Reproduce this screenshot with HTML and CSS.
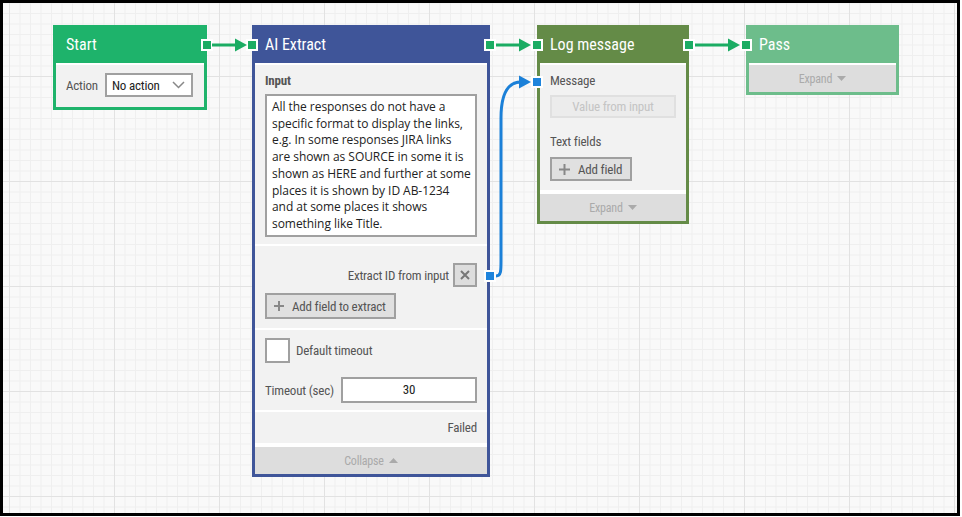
FILE: index.html
```html
<!DOCTYPE html>
<html lang="en">
<head>
    <meta charset="UTF-8">
    <meta name="viewport" content="width=device-width, initial-scale=1.0">
    <title>Flow editor</title>
    <link rel="stylesheet" href="styles.css">
</head>
<body>
    <div class="frame">
        <!-- Start -->
        <div class="node node-start">
            <div class="node-head">Start<span class="port port-out"></span></div>
            <div class="node-body">
                <div class="section section-start">
                    <span class="label">Action</span>
                    <div class="select">
                        <span>No action</span>
                        <svg width="13" height="8" viewBox="0 0 13 8"><polyline points="1,1 6.5,6.5 12,1" fill="none" stroke="#888" stroke-width="1.5"/></svg>
                    </div>
                </div>
            </div>
        </div>

        <!-- AI Extract -->
        <div class="node node-ai">
            <div class="node-head"><span class="port port-in"></span>AI Extract<span class="port port-out"></span></div>
            <div class="node-body">
                <div class="section">
                    <div class="label label-strong">Input</div>
                    <textarea class="textarea" wrap="off" readonly>All the responses do not have a
specific format to display the links,
e.g. In some responses JIRA links
are shown as SOURCE in some it is
shown as HERE and further at some
places it is shown by ID AB-1234
and at some places it shows
something like Title.</textarea>
                </div>
                <div class="section section-extract">
                    <div class="field-row">
                        <span class="label">Extract ID from input</span>
                        <span class="icon-btn">
                            <svg width="10" height="10" viewBox="0 0 10 10"><path d="M1 1 L9 9 M9 1 L1 9" stroke="#777" stroke-width="2"/></svg>
                        </span>
                        <span class="port port-blue port-right"></span>
                    </div>
                    <div class="btn">
                        <svg width="10" height="10" viewBox="0 0 10 10"><path d="M5 0 V10 M0 5 H10" stroke="#888" stroke-width="2"/></svg>
                        <span>Add field to extract</span>
                    </div>
                </div>
                <div class="section">
                    <div class="check-row">
                        <span class="checkbox"></span>
                        <span class="label">Default timeout</span>
                    </div>
                    <div class="timeout-row">
                        <span class="label">Timeout (sec)</span>
                        <div class="text-input">30</div>
                    </div>
                </div>
                <div class="section section-status">
                    <span class="label">Failed</span>
                </div>
                <div class="footer">Collapse
                    <svg width="9" height="5" viewBox="0 0 9 5"><polygon points="0,5 4.5,0 9,5" fill="#aaa"/></svg>
                </div>
            </div>
        </div>

        <!-- Log message -->
        <div class="node node-log">
            <div class="node-head"><span class="port port-in"></span>Log message<span class="port port-out"></span></div>
            <div class="node-body">
                <div class="section section-log">
                    <div class="label field-row-left">Message<span class="port port-blue port-left"></span></div>
                    <div class="value-box">Value from input</div>
                    <div class="label label-gap">Text fields</div>
                    <div class="btn btn-small">
                        <svg width="11" height="11" viewBox="0 0 11 11"><path d="M5.5 0 V11 M0 5.5 H11" stroke="#888" stroke-width="2"/></svg>
                        <span>Add field</span>
                    </div>
                </div>
                <div class="footer">Expand
                    <svg width="9" height="5" viewBox="0 0 9 5"><polygon points="0,0 9,0 4.5,5" fill="#aaa"/></svg>
                </div>
            </div>
        </div>

        <!-- Pass -->
        <div class="node node-pass">
            <div class="node-head"><span class="port port-in"></span>Pass</div>
            <div class="node-body">
                <div class="footer">Expand
                    <svg width="9" height="5" viewBox="0 0 9 5"><polygon points="0,0 9,0 4.5,5" fill="#aaa"/></svg>
                </div>
            </div>
        </div>

        <svg class="edges" width="954" height="510" viewBox="3 3 954 510">
            <g fill="#1bac63" stroke="#1bac63">
                <line x1="212" y1="45" x2="237" y2="45" stroke-width="3"/>
                <polygon points="235,38.5 247,45 235,51.5" stroke="none"/>
                <line x1="496" y1="45" x2="521" y2="45" stroke-width="3"/>
                <polygon points="519,38.5 531,45 519,51.5" stroke="none"/>
                <line x1="695" y1="45" x2="730" y2="45" stroke-width="3"/>
                <polygon points="728,38.5 740,45 728,51.5" stroke="none"/>
            </g>
            <path d="M496 276 C501 276 501 271 501 261 L501 118 C501 96 506 82 521 82" fill="none" stroke="#1b80d8" stroke-width="3"/>
            <polygon points="519,75.5 531,82 519,88.5" fill="#1b80d8"/>
        </svg>
    </div>
</body>
</html>
```

FILE: styles.css
```css
* {
    box-sizing: border-box;
}
body {
    margin: 0;
    background: #fff;
    font-family: "Roboto Condensed", "Liberation Sans Narrow", Roboto, sans-serif;
    font-stretch: condensed;
    font-size: 13px;
    letter-spacing: -0.2px;
    color: #555;
}
.frame {
    position: relative;
    width: 960px;
    height: 516px;
    border: 3px solid #000;
    overflow: hidden;
    background-color: #f9f9f9;
    background-image:
        linear-gradient(to right, #e2e2e2 1px, transparent 1px),
        linear-gradient(to bottom, #e2e2e2 1px, transparent 1px),
        linear-gradient(to right, #efefef 1px, transparent 1px),
        linear-gradient(to bottom, #efefef 1px, transparent 1px);
    background-size: 105px 105px, 105px 105px, 10.5px 10.5px, 10.5px 10.5px;
    background-position: 6px 73px;
}
.edges {
    position: absolute;
    left: 0;
    top: 0;
    pointer-events: none;
}

/* nodes */
.node {
    position: absolute;
    top: 22px;
    border: 3px solid var(--c);
    background: #fff;
}
.node-start { --c: #1eb36b; left: 50px; width: 154px; }
.node-ai    { --c: #3f5599; left: 249px; width: 238px; }
.node-log   { --c: #648b47; left: 534px; width: 152px; }
.node-pass  { --c: #6dbd8b; left: 743px; width: 153px; }

.node-head {
    position: relative;
    display: flex;
    align-items: center;
    height: 35px;
    padding: 0 0 2px 10px;
    background: var(--c);
    color: #fff;
    font-size: 16px;
    letter-spacing: 0;
}
.node-body {
    display: flex;
    flex-direction: column;
    gap: 2px;
    padding-top: 2px;
    background: #fff;
}
.section {
    background: #f2f2f2;
    padding: 8px 10px 7px;
}
.footer {
    display: flex;
    align-items: center;
    justify-content: center;
    gap: 5px;
    height: 27px;
    background: #ddd;
    color: #aaa;
    font-size: 12px;
}
.section + .footer {
    margin-top: 2px;
}

/* ports */
.port {
    position: absolute;
    top: 11px;
    width: 12px;
    height: 12px;
    border: 2px solid #fff;
    background: #1bac63;
}
.port-in { left: -9px; }
.port-out { right: -9px; }
.port-blue {
    background: #1e84dc;
    top: 50%;
    margin-top: -5px;
}
.port-right { right: -19px; }
.port-left { left: -19px; }

/* fields */
.label {
    line-height: 15px;
    color: #555;
}
.label-strong {
    font-weight: bold;
    margin-bottom: 6px;
}
.section-start {
    display: flex;
    align-items: center;
    gap: 7px;
    padding: 8px 10px 10px;
}
.select {
    display: flex;
    align-items: center;
    justify-content: space-between;
    width: 88px;
    height: 24px;
    padding: 0 6px 0 5px;
    border: 2px solid #a0a0a0;
    background: #fff;
    color: #222;
}
.textarea {
    display: block;
    width: 100%;
    height: 143px;
    margin: 0;
    padding: 3px 5px;
    border: 2px solid #a0a0a0;
    background: #fff;
    color: #222;
    font-family: "Open Sans", sans-serif;
    font-size: 12px;
    line-height: 16.7px;
    letter-spacing: -0.05px;
    white-space: pre;
    resize: none;
    overflow: hidden;
    outline: none;
}
.section-extract {
    display: flex;
    flex-direction: column;
    align-items: flex-start;
    padding: 17px 10px 9px;
}
.field-row {
    position: relative;
    align-self: stretch;
    display: flex;
    align-items: center;
    justify-content: flex-end;
    gap: 4px;
    height: 24px;
}
.icon-btn {
    display: flex;
    align-items: center;
    justify-content: center;
    width: 24px;
    height: 24px;
    border: 2px solid #a0a0a0;
    background: #ddd;
}
.btn {
    display: inline-flex;
    align-items: center;
    gap: 8px;
    height: 26px;
    margin-top: 6px;
    padding: 0 8px 0 7px;
    border: 2px solid #a0a0a0;
    background: #e0e0e0;
    color: #555;
}
.btn-small {
    height: 24px;
    margin-top: 8px;
}
.check-row {
    display: flex;
    align-items: center;
    gap: 6px;
}
.checkbox {
    width: 25px;
    height: 25px;
    border: 2px solid #a0a0a0;
    background: #fff;
}
.timeout-row {
    display: flex;
    align-items: center;
    gap: 7px;
    margin-top: 14px;
}
.text-input {
    flex: 1;
    height: 26px;
    line-height: 22px;
    border: 2px solid #a0a0a0;
    background: #fff;
    color: #222;
    text-align: center;
}
.section-status {
    padding: 8px 10px;
    text-align: right;
}
.section-status .label {
    line-height: 14px;
}
.section-log {
    display: flex;
    flex-direction: column;
    align-items: flex-start;
    padding: 8px 10px 9px;
}
.field-row-left {
    position: relative;
}
.value-box {
    align-self: stretch;
    height: 23px;
    margin-top: 7px;
    line-height: 19px;
    border: 2px solid #e0e0e0;
    background: #ececec;
    color: #c4c4c4;
    text-align: center;
}
.label-gap {
    margin-top: 16px;
}
```
